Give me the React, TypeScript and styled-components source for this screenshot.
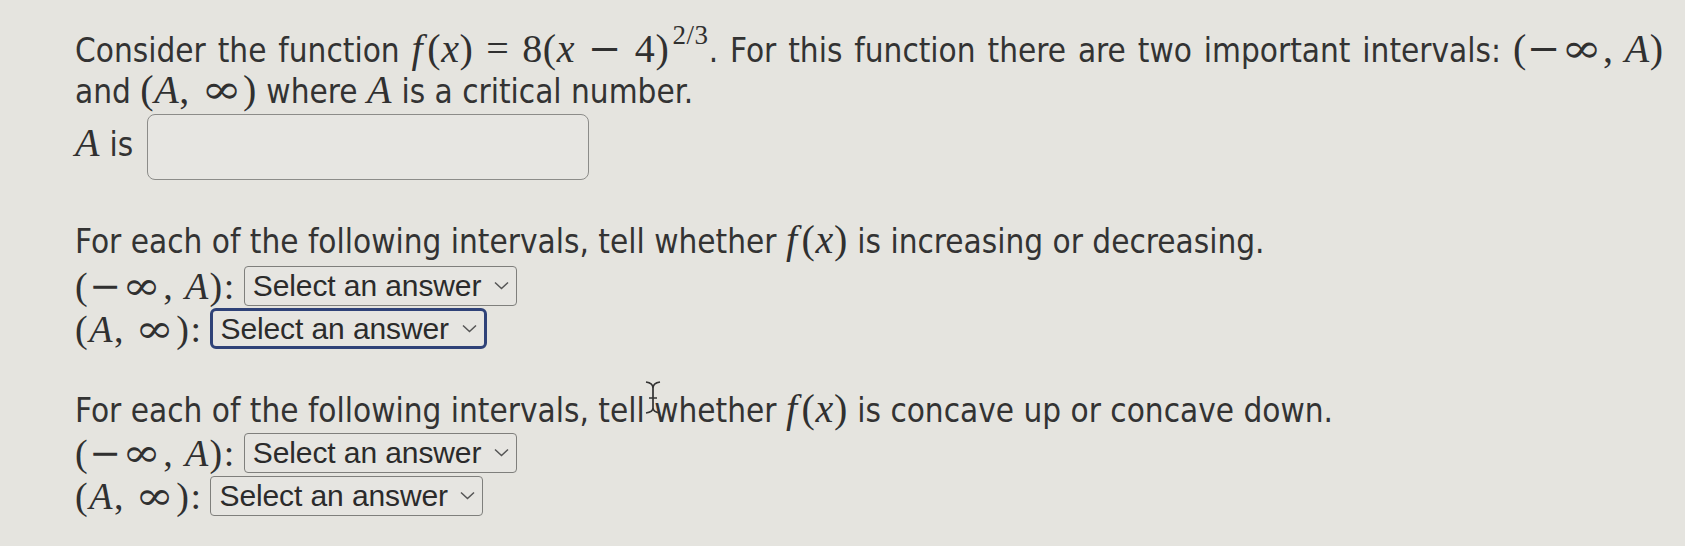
import React from "react";
import styled, { createGlobalStyle } from "styled-components";

const Global = createGlobalStyle`
  html, body { margin: 0; padding: 0; }
  body {
    background: #e5e4df;
    color: #333333;
    font-family: "DejaVu Sans Condensed", "DejaVu Sans", Verdana, sans-serif;
  }
`;

const Page = styled.div`
  position: relative;
  width: 1685px;
  height: 546px;
  box-sizing: border-box;
  padding: 30px 0 0 75px;
  background: #e5e4df;
  overflow: hidden;
`;

const Para = styled.div`
  margin: 0;
  font-size: 33px;
  line-height: 41px;
  white-space: nowrap;
`;

const Line = styled.div<{ $wide?: boolean }>`
  word-spacing: ${(p) => (p.$wide ? "2.5px" : "0")};
`;

const M = styled.span`
  font-family: "Liberation Serif", "DejaVu Serif", serif;
  font-size: 40px;
  line-height: 0;
  letter-spacing: 0.6px;
  word-spacing: 0;
  color: #303030;
`;

const I = styled.i<{ $corr?: boolean }>`
  font-family: "Liberation Serif", "DejaVu Serif", serif;
  font-style: italic;
  margin-right: ${(p) => (p.$corr ? "0.1em" : "0")};
`;

const Op = styled.span`
  margin: 0 0.32em;
`;

const Sym = styled.span`
  font-family: "DejaVu Serif", serif;
`;

const InfGlyph = styled.span`
  display: inline-block;
  font-family: "DejaVu Serif", serif;
  line-height: 0.8;
  transform: scaleX(1.22);
  margin: 0 0.1em;
`;

const Comma = styled.span`
  margin-right: 0.28em;
`;

const Sup = styled.sup`
  font-size: 27px;
  vertical-align: 18px;
  line-height: 0;
  margin-left: 3px;
`;

const AnswerRow = styled.div`
  display: flex;
  align-items: center;
  gap: 14px;
  margin-top: 2px;
`;

const Label = styled.span`
  font-size: 33px;
  padding-bottom: 6px;
`;

const TextBox = styled.div`
  width: 442px;
  height: 66px;
  box-sizing: border-box;
  border: 1.5px solid #8c8c89;
  border-radius: 8px;
  background: #e7e6e2;
`;

const Section = styled.div<{ $top: number }>`
  margin-top: ${(p) => p.$top}px;
  display: flex;
  flex-direction: column;
`;

const Row = styled.div<{ $gap: number }>`
  display: flex;
  align-items: center;
  gap: 8px;
  height: 41px;
  margin-top: ${(p) => p.$gap}px;
`;

const RowLabel = styled.span`
  font-family: "Liberation Serif", "DejaVu Serif", serif;
  font-size: 38px;
  line-height: 38px;
  letter-spacing: 1.5px;
  white-space: nowrap;
  color: #303030;
`;

const SelectBox = styled.div<{ $focus?: boolean }>`
  width: ${(p) => (p.$focus ? 277 : 273)}px;
  height: ${(p) => (p.$focus ? 41 : 40)}px;
  box-sizing: border-box;
  display: flex;
  align-items: center;
  justify-content: space-between;
  padding: 0 7px 0 ${(p) => (p.$focus ? 7 : 8)}px;
  border: ${(p) => (p.$focus ? "3px solid #2f4278" : "1.5px solid #7f7f7c")};
  border-radius: ${(p) => (p.$focus ? 6 : 4)}px;
  font-family: "Liberation Sans", Arial, sans-serif;
  font-size: 30px;
  letter-spacing: -0.1px;
  color: #2b2b2b;
  background: #e6e5e1;
`;

const Chevron = () => (
  <svg width="15" height="9" viewBox="0 0 15 9" fill="none">
    <path d="M1 1.5 L7.5 7.5 L14 1.5" stroke="#555" strokeWidth="1.5" />
  </svg>
);

const Cursor = styled.svg`
  position: absolute;
  left: 643px;
  top: 380px;
`;

function Select({ focus }: { focus?: boolean }) {
  return (
    <SelectBox $focus={focus}>
      <span>Select an answer</span>
      <Chevron />
    </SelectBox>
  );
}

const Inf = () => <InfGlyph>∞</InfGlyph>;
const Minus = () => <Sym>−</Sym>;

const NegInterval = () => (
  <>
    (<Minus />
    <Inf />
    <Comma>,</Comma>
    <I>A</I>)
  </>
);

const PosInterval = () => (
  <>
    (<I>A</I>
    <Comma>,</Comma>
    <Inf />)
  </>
);

export default function App() {
  return (
    <>
      <Global />
      <Page>
        <Para>
          <Line $wide>
            Consider the function{" "}
            <M>
              <I $corr>f</I>(<I>x</I>)<Op>=</Op>8(<I>x</I>
              <Op>
                <Minus />
              </Op>
              4)<Sup>2/3</Sup>
            </M>
            . For this function there are two important intervals:{" "}
            <M>
              <NegInterval />
            </M>
          </Line>
          <Line>
            and{" "}
            <M>
              <PosInterval />
            </M>{" "}
            where{" "}
            <M>
              <I>A</I>
            </M>{" "}
            is a critical number.
          </Line>
        </Para>
        <AnswerRow>
          <Label>
            <M>
              <I>A</I>
            </M>{" "}
            is
          </Label>
          <TextBox />
        </AnswerRow>

        <Section $top={41}>
          <Para>
            For each of the following intervals, tell whether{" "}
            <M>
              <I $corr>f</I>(<I>x</I>)
            </M>{" "}
            is increasing or decreasing.
          </Para>
          <Row $gap={3}>
            <RowLabel>
              <NegInterval />:
            </RowLabel>
            <Select />
          </Row>
          <Row $gap={2}>
            <RowLabel>
              <PosInterval />:
            </RowLabel>
            <Select focus />
          </Row>
        </Section>

        <Section $top={41}>
          <Para>
            For each of the following intervals, tell whether{" "}
            <M>
              <I $corr>f</I>(<I>x</I>)
            </M>{" "}
            is concave up or concave down.
          </Para>
          <Row $gap={1}>
            <RowLabel>
              <NegInterval />:
            </RowLabel>
            <Select />
          </Row>
          <Row $gap={2}>
            <RowLabel>
              <PosInterval />:
            </RowLabel>
            <Select />
          </Row>
        </Section>

        <Cursor width="20" height="34" viewBox="0 0 20 34">
          <path
            d="M3 2 Q10 3 10 8 L10 28 Q10 32 3 33 M17 2 Q10 3 10 8 M10 28 Q10 32 17 33 M6 18 L14 18"
            stroke="#333"
            strokeWidth="1.7"
            fill="none"
          />
        </Cursor>
      </Page>
    </>
  );
}
